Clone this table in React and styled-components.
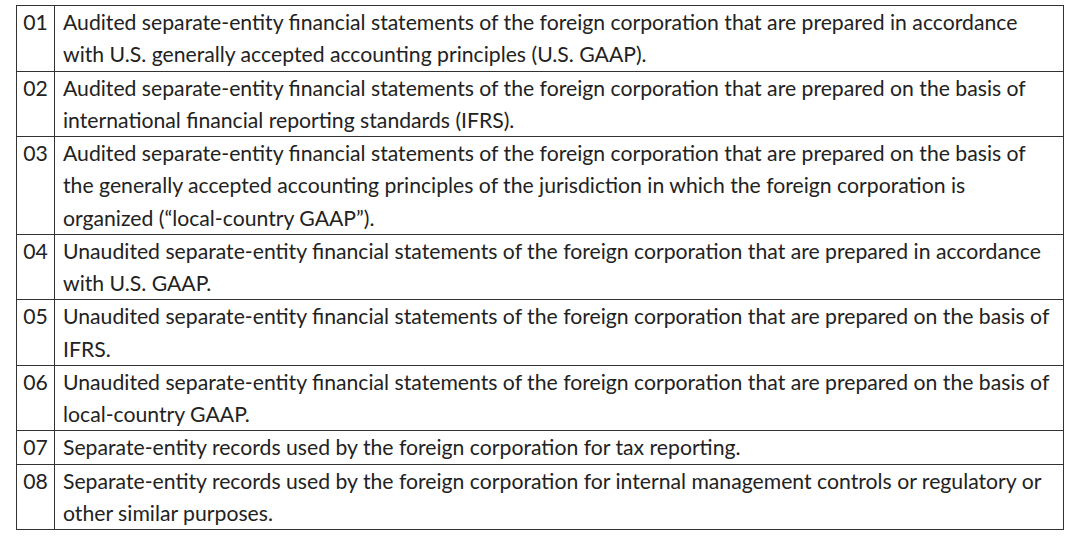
import React from "react";
import styled, { createGlobalStyle } from "styled-components";

const rows = [
  {
    code: "01",
    text: "Audited separate-entity financial statements of the foreign corporation that are prepared in accordance with U.S. generally accepted accounting principles (U.S. GAAP).",
  },
  {
    code: "02",
    text: "Audited separate-entity financial statements of the foreign corporation that are prepared on the basis of international financial reporting standards (IFRS).",
  },
  {
    code: "03",
    text: "Audited separate-entity financial statements of the foreign corporation that are prepared on the basis of the generally accepted accounting principles of the jurisdiction in which the foreign corporation is organized (\u201clocal-country GAAP\u201d).",
  },
  {
    code: "04",
    text: "Unaudited separate-entity financial statements of the foreign corporation that are prepared in accordance with U.S. GAAP.",
  },
  {
    code: "05",
    text: "Unaudited separate-entity financial statements of the foreign corporation that are prepared on the basis of IFRS.",
  },
  {
    code: "06",
    text: "Unaudited separate-entity financial statements of the foreign corporation that are prepared on the basis of local-country GAAP.",
  },
  {
    code: "07",
    text: "Separate-entity records used by the foreign corporation for tax reporting.",
  },
  {
    code: "08",
    text: "Separate-entity records used by the foreign corporation for internal management controls or regulatory or other similar purposes.",
  },
];

const GlobalStyle = createGlobalStyle`
  body {
    margin: 0;
    background: #fff;
  }
`;

export default function App() {
  return (
    <Container>
      <GlobalStyle />
      <Table>
        <tbody>
          {rows.map((el) => (
            <tr key={el.code}>
              <CodeCell>{el.code}</CodeCell>
              <TextCell>{el.text}</TextCell>
            </tr>
          ))}
        </tbody>
      </Table>
    </Container>
  );
}

const Container = styled.div`
  padding: 5px 16px;
  font-family: Lato, "Liberation Sans", sans-serif;
  color: #222;
`;

const Table = styled.table`
  width: 1048px;
  border-collapse: collapse;
  border: 1px solid #222;
  font-size: 21.2px;
  line-height: 32.25px;
`;

const CodeCell = styled.td`
  width: 37px;
  padding: 0;
  text-align: center;
  vertical-align: top;
  border: 1px solid #333;
`;

const TextCell = styled.td`
  padding: 0 8px;
  vertical-align: top;
  border: 1px solid #333;
  hyphens: manual;
`;
